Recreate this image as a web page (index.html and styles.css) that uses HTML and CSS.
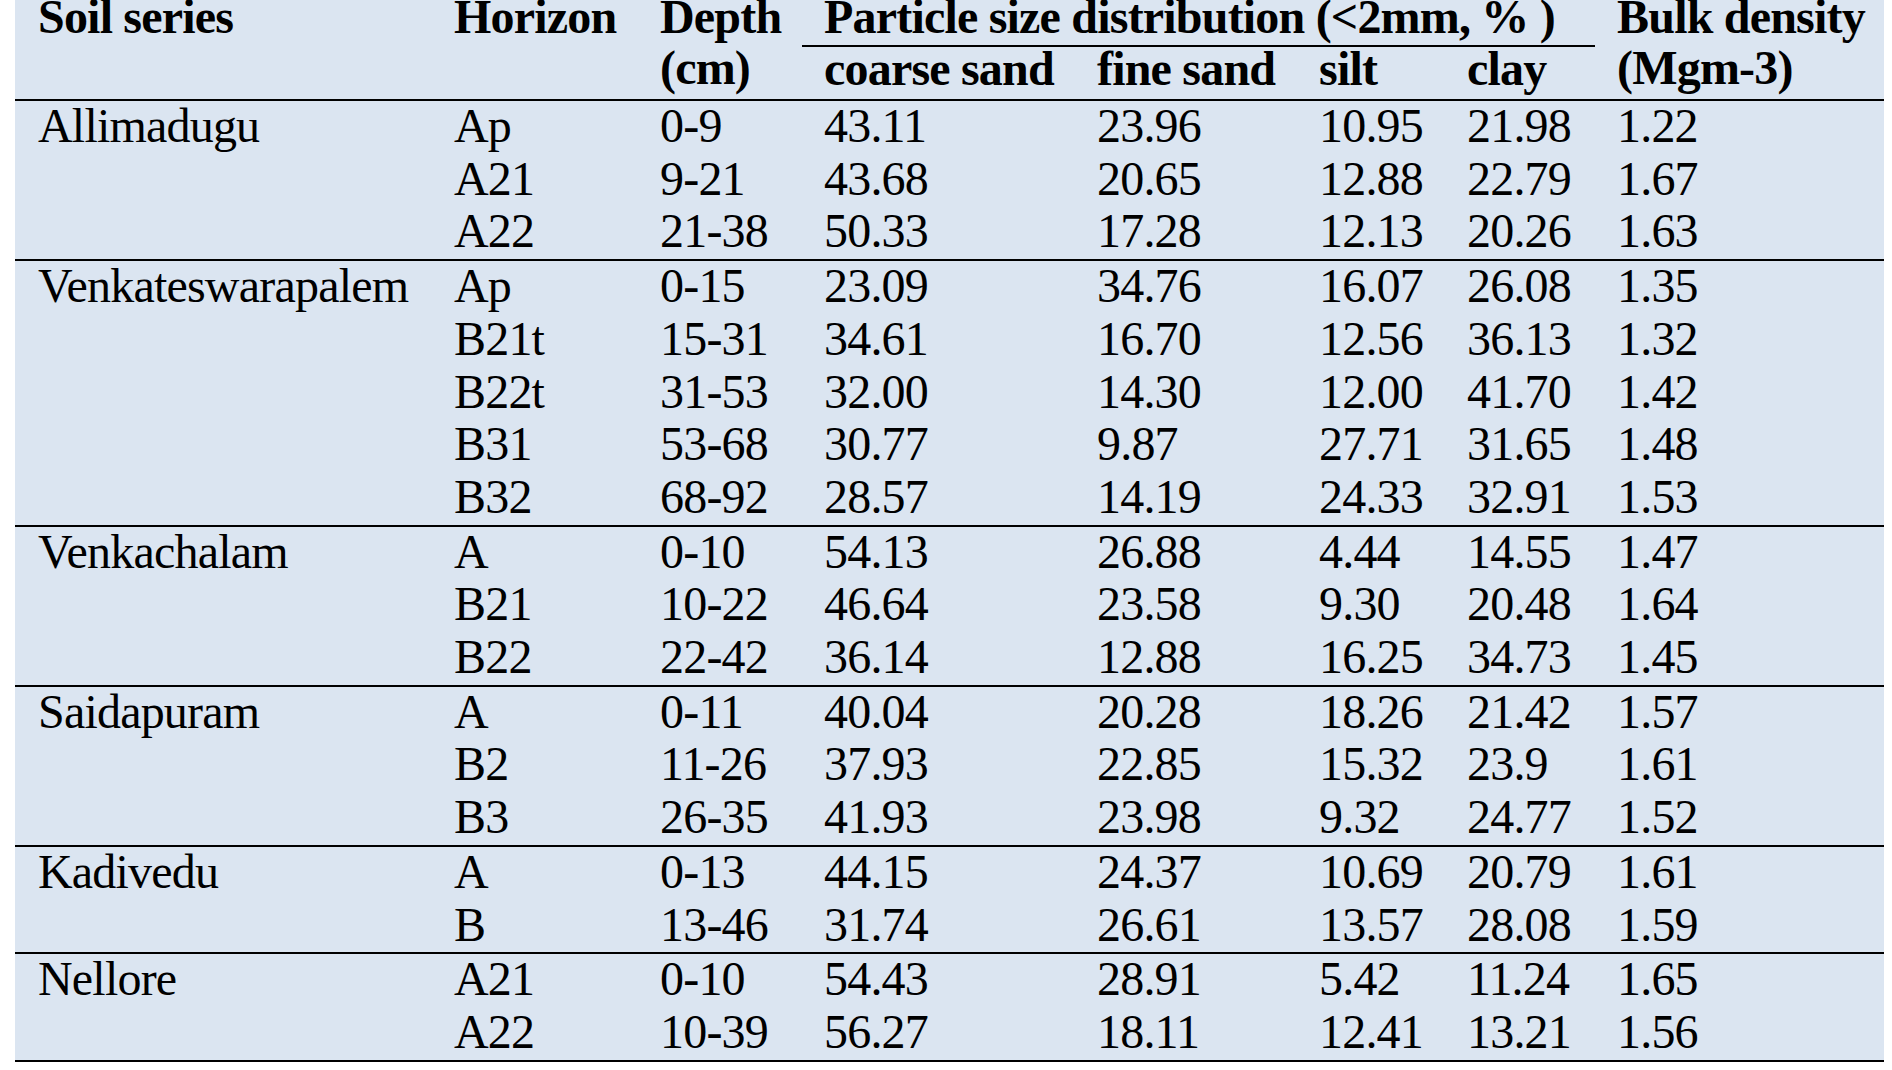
FILE: index.html
```html
<!DOCTYPE html>
<html lang="en">
<head>
<meta charset="UTF-8">
<meta name="viewport" content="width=device-width, initial-scale=1.0">
<title>Soil particle size distribution</title>
<link rel="stylesheet" href="styles.css">
</head>
<body>
<table class="soil">
    <colgroup>
        <col class="c-series">
        <col class="c-horizon">
        <col class="c-depth">
        <col class="c-coarse">
        <col class="c-fine">
        <col class="c-silt">
        <col class="c-clay">
        <col class="c-bulk">
    </colgroup>
    <thead>
        <tr>
            <th rowspan="2" class="first"><div class="l1">Soil series</div></th>
            <th rowspan="2"><div class="l1">Horizon</div></th>
            <th rowspan="2"><div class="l1">Depth</div><div class="l2">(cm)</div></th>
            <th colspan="4" class="span"><div class="l1">Particle size distribution (&lt;2mm, % )</div></th>
            <th rowspan="2"><div class="l1">Bulk density</div><div class="l2">(Mgm-3)</div></th>
        </tr>
        <tr class="sub">
            <th>coarse sand</th>
            <th>fine sand</th>
            <th>silt</th>
            <th>clay</th>
        </tr>
    </thead>
    <tbody>
        <tr>
            <td rowspan="3" class="first">Allimadugu</td>
            <td>Ap</td><td>0-9</td><td>43.11</td><td>23.96</td><td>10.95</td><td>21.98</td><td>1.22</td>
        </tr>
        <tr><td>A21</td><td>9-21</td><td>43.68</td><td>20.65</td><td>12.88</td><td>22.79</td><td>1.67</td></tr>
        <tr><td>A22</td><td>21-38</td><td>50.33</td><td>17.28</td><td>12.13</td><td>20.26</td><td>1.63</td></tr>

        <tr class="group">
            <td rowspan="5" class="first">Venkateswarapalem</td>
            <td>Ap</td><td>0-15</td><td>23.09</td><td>34.76</td><td>16.07</td><td>26.08</td><td>1.35</td>
        </tr>
        <tr><td>B21t</td><td>15-31</td><td>34.61</td><td>16.70</td><td>12.56</td><td>36.13</td><td>1.32</td></tr>
        <tr><td>B22t</td><td>31-53</td><td>32.00</td><td>14.30</td><td>12.00</td><td>41.70</td><td>1.42</td></tr>
        <tr><td>B31</td><td>53-68</td><td>30.77</td><td>9.87</td><td>27.71</td><td>31.65</td><td>1.48</td></tr>
        <tr><td>B32</td><td>68-92</td><td>28.57</td><td>14.19</td><td>24.33</td><td>32.91</td><td>1.53</td></tr>

        <tr class="group">
            <td rowspan="3" class="first">Venkachalam</td>
            <td>A</td><td>0-10</td><td>54.13</td><td>26.88</td><td>4.44</td><td>14.55</td><td>1.47</td>
        </tr>
        <tr><td>B21</td><td>10-22</td><td>46.64</td><td>23.58</td><td>9.30</td><td>20.48</td><td>1.64</td></tr>
        <tr><td>B22</td><td>22-42</td><td>36.14</td><td>12.88</td><td>16.25</td><td>34.73</td><td>1.45</td></tr>

        <tr class="group">
            <td rowspan="3" class="first">Saidapuram</td>
            <td>A</td><td>0-11</td><td>40.04</td><td>20.28</td><td>18.26</td><td>21.42</td><td>1.57</td>
        </tr>
        <tr><td>B2</td><td>11-26</td><td>37.93</td><td>22.85</td><td>15.32</td><td>23.9</td><td>1.61</td></tr>
        <tr><td>B3</td><td>26-35</td><td>41.93</td><td>23.98</td><td>9.32</td><td>24.77</td><td>1.52</td></tr>

        <tr class="group">
            <td rowspan="2" class="first">Kadivedu</td>
            <td>A</td><td>0-13</td><td>44.15</td><td>24.37</td><td>10.69</td><td>20.79</td><td>1.61</td>
        </tr>
        <tr><td>B</td><td>13-46</td><td>31.74</td><td>26.61</td><td>13.57</td><td>28.08</td><td>1.59</td></tr>

        <tr class="group">
            <td rowspan="2" class="first last">Nellore</td>
            <td>A21</td><td>0-10</td><td>54.43</td><td>28.91</td><td>5.42</td><td>11.24</td><td>1.65</td>
        </tr>
        <tr class="end"><td>A22</td><td>10-39</td><td>56.27</td><td>18.11</td><td>12.41</td><td>13.21</td><td>1.56</td></tr>
    </tbody>
</table>
</body>
</html>
```

FILE: styles.css
```css
body {
    margin: 0;
    background: #fff;
    font-family: "Liberation Serif", "Times New Roman", serif;
    color: #000;
}
.soil {
    margin-left: 15px;
    width: 1869px;
    table-layout: fixed;
    border-collapse: separate;
    border-spacing: 0;
    background: #dbe5f1;
    font-size: 48px;
    letter-spacing: -0.8px;
}
.c-series { width: 417px; }
.c-horizon { width: 206px; }
.c-depth { width: 164px; }
.c-coarse { width: 273px; }
.c-fine { width: 222px; }
.c-silt { width: 148px; }
.c-clay { width: 150px; }
.c-bulk { width: 289px; }

th, td {
    padding: 0 0 0 22px;
    text-align: left;
    vertical-align: top;
    white-space: nowrap;
}
.first {
    padding-left: 23px;
}
th {
    font-weight: bold;
    border-bottom: 2px solid #000;
}
th .l1 {
    line-height: 33.5px;
}
th .l2 {
    padding-top: 12.5px;
    line-height: 43px;
}
th.span {
    padding-bottom: 11.5px;
}
.sub th {
    line-height: 43px;
    padding-bottom: 9px;
}
td {
    line-height: 49.7px;
    padding-bottom: 3px;
}
.group td {
    border-top: 2px solid #000;
}
.end td, td.last {
    border-bottom: 2px solid #000;
}
```
